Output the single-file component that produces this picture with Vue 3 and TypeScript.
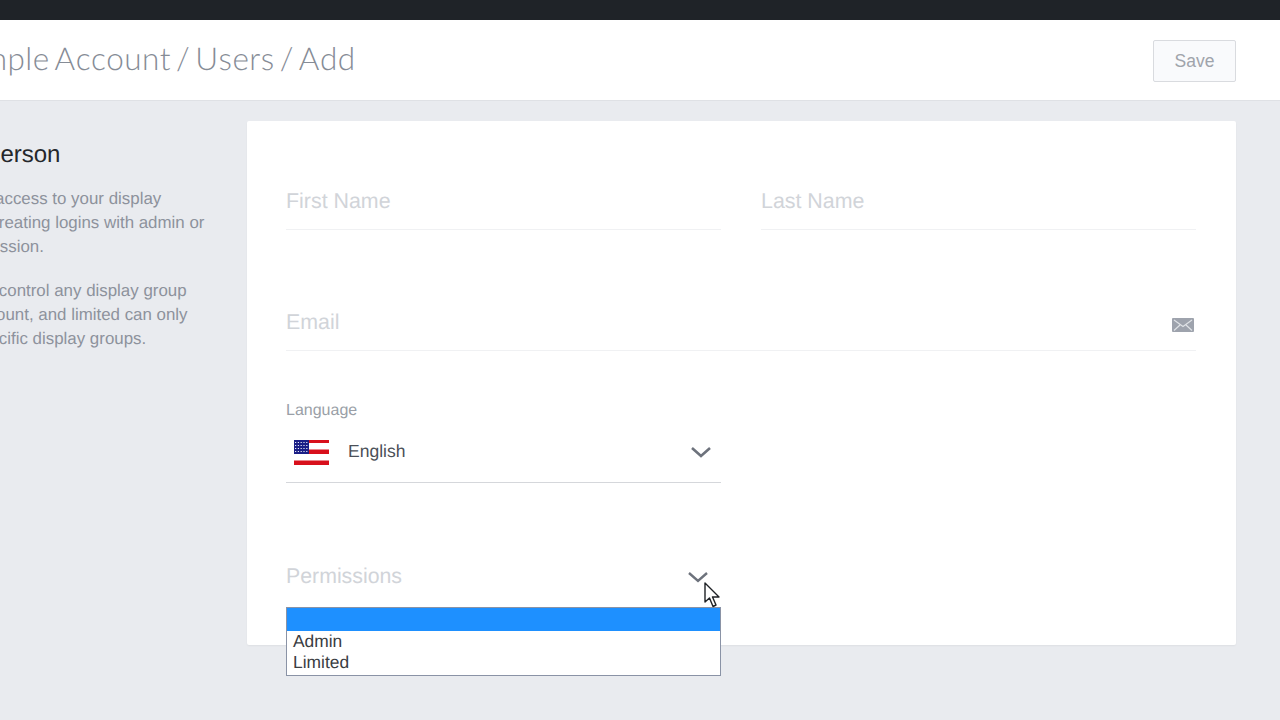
<script setup lang="ts">
const intro: string[][] = [
  ['Give others access to your display', 'account by creating logins with admin or', 'limited permission.'],
  ['Owners can control any display group', 'the user account, and limited can only', 'program specific display groups.'],
]
const options: string[] = ['Admin', 'Limited']
</script>

<template>
  <div class="viewport">
    <div class="topbar"></div>
    <header class="header">
      <h1 class="crumbs">Example Account / Users / Add</h1>
      <button class="save" type="button">Save</button>
    </header>
    <main class="main">
      <aside class="side">
        <h2 class="side-title">Add Person</h2>
        <p v-for="(para, i) in intro" :key="i" class="side-text">
          <span v-for="line in para" :key="line" class="side-line">{{ line }}</span>
        </p>
      </aside>
      <section class="card">
        <div class="row">
          <div class="field">First Name</div>
          <div class="field">Last Name</div>
        </div>
        <div class="field field-email">
          Email
          <svg class="mail" width="22" height="14" viewBox="0 0 22 14">
            <rect width="22" height="14" rx="1" fill="#9ea3ad" />
            <path d="M2 2 11 8.5 20 2M2 12.5 8 7M20 12.5 14 7" fill="none" stroke="#dfe2e6" stroke-width="1.2" />
          </svg>
        </div>
        <div class="half">
          <div class="label">Language</div>
          <div class="select">
            <svg class="flag" width="35" height="26" viewBox="0 0 35 26">
              <rect width="35" height="26" fill="#fff" />
              <rect y="0" width="35" height="3" fill="#d8101c" />
              <rect y="9.5" width="35" height="4.5" fill="#d8101c" />
              <rect y="20.5" width="35" height="4.5" fill="#d8101c" />
              <rect width="15" height="14" fill="#1b1f86" />
              <path d="M1 2.5H14M1 5.5H14M1 8.5H14M1 11.5H14" stroke="#e6e8f6" stroke-width="1.1" stroke-dasharray="1.2 1.6" />
            </svg>
            <span class="lang">English</span>
            <svg class="chev" width="22" height="12" viewBox="0 0 22 12">
              <path d="M2 2 11 10 20 2" fill="none" stroke="#6d727c" stroke-width="2.6" />
            </svg>
          </div>
        </div>
        <div class="half perm">
          <span>Permissions</span>
          <svg class="chev chev-perm" width="22" height="12" viewBox="0 0 22 12">
            <path d="M2 2 11 10 20 2" fill="none" stroke="#6d727c" stroke-width="2.4" />
          </svg>
          <ul class="list">
            <li class="opt opt-active"></li>
            <li v-for="o in options" :key="o" class="opt">{{ o }}</li>
          </ul>
          <svg class="cursor" width="18" height="26" viewBox="0 0 18 26">
            <path d="M1 1V20L5.5 16 9 24.5 12 23 8.5 15H15Z" fill="#fff" stroke="#1f2226" stroke-width="1.4" stroke-linejoin="round" />
          </svg>
        </div>
      </section>
    </main>
  </div>
</template>

<style>
html, body { margin: 0; background: #e9ebef; }
</style>

<style scoped>
.viewport {
  width: 1280px;
  height: 720px;
  overflow: hidden;
  background: #e9ebef;
  font-family: "Liberation Sans", Arial, sans-serif;
  text-rendering: geometricPrecision;
}
.topbar { height: 20px; background: #1f2328; }
.header {
  height: 81px;
  box-sizing: border-box;
  margin-left: -36px;
  padding: 0 44px 0 0;
  display: flex;
  align-items: center;
  justify-content: space-between;
  background: #fff;
  border-bottom: 1px solid #dfe1e5;
}
.crumbs {
  margin: 0 0 5px -32px;
  font: 300 31.5px "Lato", sans-serif;
  font-kerning: none;
  color: #868c96;
  letter-spacing: 0.45px;
  word-spacing: -4px;
}
.save {
  width: 83px;
  height: 42px;
  margin-top: 1px;
  padding-top: 3px;
  background: #f9fafc;
  border: 1px solid #d9dbdf;
  border-radius: 2px;
  font: 400 17.5px "Liberation Sans", Arial, sans-serif;
  color: #a0a4ab;
}
.main {
  display: flex;
  margin-left: -96px;
  padding-top: 20px;
}
.side { width: 343px; flex: none; padding-top: 20px; box-sizing: border-box; }
.side-title {
  margin: 0 0 18px 31px;
  font: 400 24px/28px "Liberation Sans", Arial, sans-serif;
  color: #24272b;
}
.side-text {
  margin: 0 0 20px;
  font-size: 16.9px;
  line-height: 24px;
  color: #8d929c;
}
.side-line { display: block; white-space: nowrap; }
.card {
  width: 989px;
  height: 524px;
  flex: none;
  box-sizing: border-box;
  padding: 60px 40px 0 39px;
  background: #fff;
  border-radius: 2px;
  box-shadow: 0 1px 2px rgba(0, 0, 0, 0.05);
}
.row { display: flex; gap: 40px; }
.row .field { flex: 1; }
.field {
  height: 49px;
  box-sizing: border-box;
  padding-top: 7px;
  font-size: 21.4px;
  line-height: 26px;
  color: #d1d4d9;
  border-bottom: 1px solid #f0f1f3;
}
.field-email {
  margin-top: 72px;
  position: relative;
}
.mail { position: absolute; right: 2px; top: 16px; }
.half { width: 435px; }
.label {
  margin-top: 50px;
  font-size: 16px;
  line-height: 19px;
  color: #9a9fa7;
}
.select {
  display: flex;
  align-items: center;
  height: 63px;
  box-sizing: border-box;
  padding: 1px 9px 0 8px;
  border-bottom: 1px solid #d5d7db;
}
.flag { flex: none; margin-top: 2px; }
.lang { margin-left: 19px; font-size: 17.5px; color: #4b5058; }
.chev { margin-left: auto; margin-top: 1px; }
.perm {
  position: relative;
  margin-top: 80px;
  font-size: 21.3px;
  line-height: 26px;
  color: #d1d4d9;
}
.chev-perm { position: absolute; right: 12px; top: 8px; margin: 0; }
.list {
  position: absolute;
  left: 0;
  top: 44px;
  width: 435px;
  height: 69px;
  box-sizing: border-box;
  margin: 0;
  padding: 0;
  list-style: none;
  background: #fff;
  border: 1px solid #8a93a6;
  font-size: 17.4px;
  line-height: 21px;
  color: #3a3d42;
}
.opt { padding-left: 6px; height: 21px; }
.opt-active { background: #1e90ff; height: 23px; }
.cursor { position: absolute; left: 418px; top: 19px; }
</style>
